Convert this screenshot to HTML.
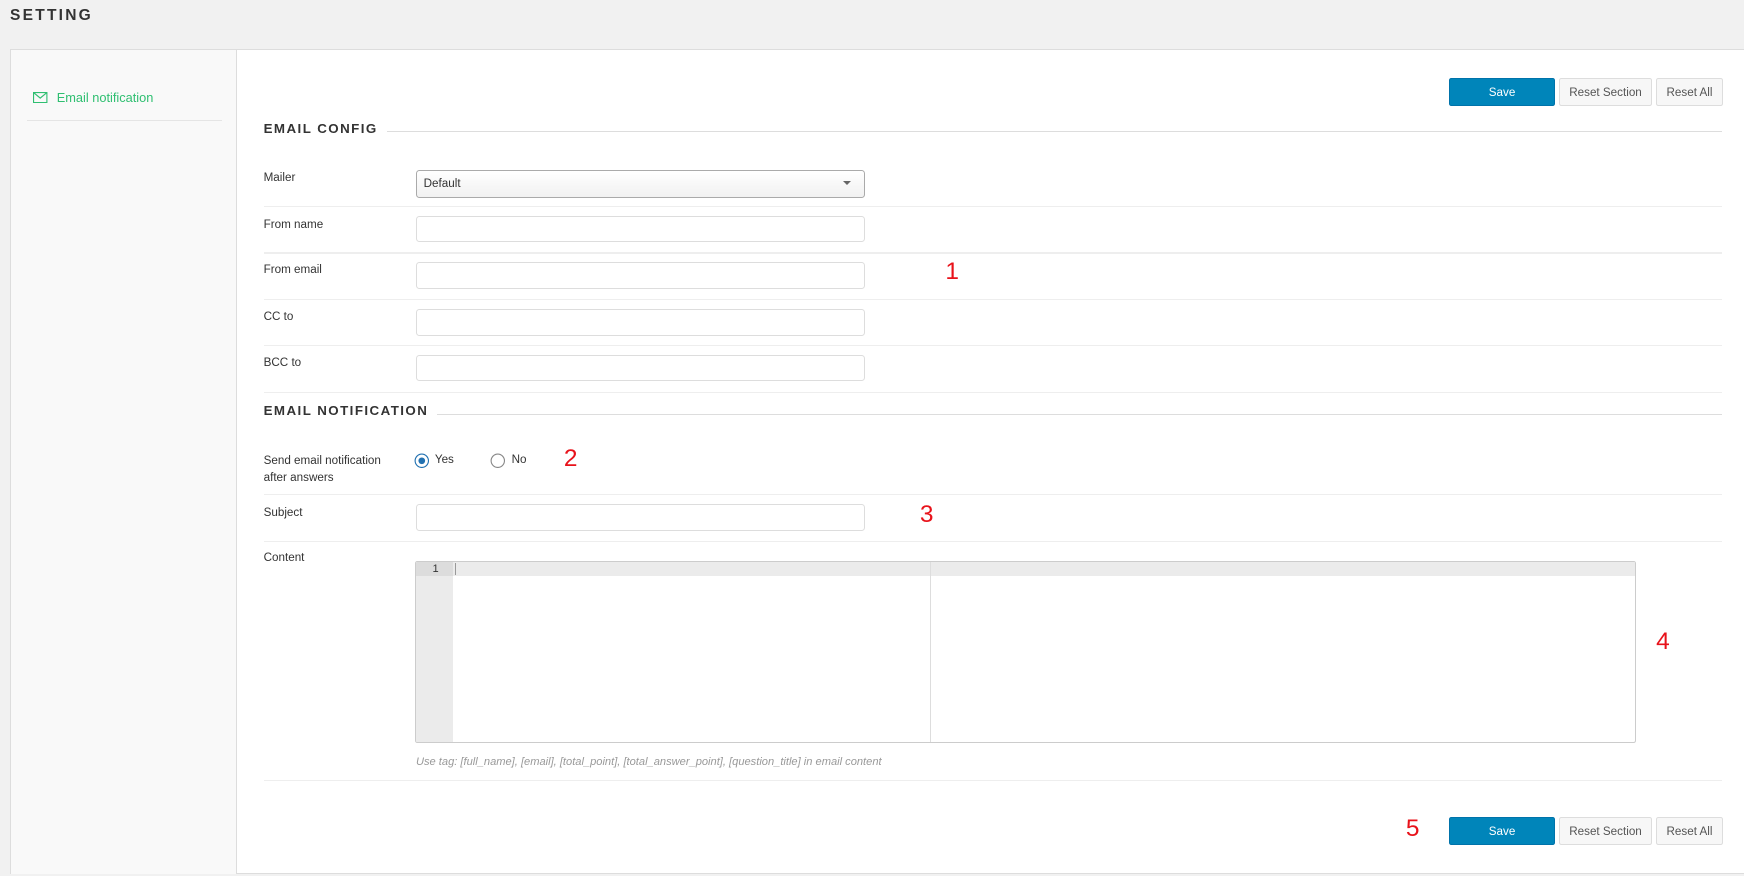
<!DOCTYPE html>
<html><head><meta charset="utf-8"><style>
html,body{margin:0;padding:0;background:#f1f1f1;overflow:hidden}
body{width:1568px;height:788px;zoom:1.11224;position:relative;font-family:"Liberation Sans",sans-serif;color:#333}
.a{position:absolute}
.h1{left:9px;top:6px;font-size:14px;font-weight:bold;letter-spacing:2px;color:#333}
.panel{left:9px;top:44px;width:1570px;height:740px;background:#fff;border:1px solid #ddd}
.side{left:9px;top:44px;width:202px;height:741px;background:#f9f9f9;border-right:1px solid #ddd;border-left:1px solid #ddd;border-top:1px solid #ddd}
.btn{position:absolute;height:25px;font-size:10.5px;line-height:25px;text-align:center;border:1px solid #ddd;background:#f7f7f7;color:#555;border-radius:2px;box-sizing:border-box}
.save{background:#0085ba;border-color:#0073aa;color:#fff}
.sec{font-size:12px;font-weight:bold;letter-spacing:1.3px;color:#333}
.hr{height:1px;background:#ddd}
.lbl{font-size:10.5px;color:#333;left:237px;line-height:16px}
.inp{left:374px;width:404px;height:24px;border:1px solid #ddd;border-radius:3px;box-sizing:border-box;background:#fff}
.red{color:#e8121a;font-size:22px}
</style></head><body>
<div class="a h1">SETTING</div>
<div class="a panel"></div>
<div class="a side"></div>
<svg class="a" style="left:30px;top:83px" width="13" height="10" viewBox="0 0 13 10"><rect x="0.5" y="0.5" width="12" height="9" fill="none" stroke="#2fbf71"/><path d="M0.5 0.5L6.5 5.5L12.5 0.5" fill="none" stroke="#2fbf71"/></svg>
<div class="a" style="left:51px;top:81px;font-size:11.5px;color:#2fbf71">Email notification</div>
<div class="a hr" style="left:24px;top:108px;width:176px;background:#e5e5e5"></div>

<div class="btn save" style="left:1303px;top:70px;width:95px">Save</div>
<div class="btn" style="left:1402px;top:70px;width:83px">Reset Section</div>
<div class="btn" style="left:1489px;top:70px;width:60px">Reset All</div>

<div class="a sec" style="left:237px;top:109px">EMAIL CONFIG</div>
<div class="a hr" style="left:348px;top:118px;width:1200px"></div>

<div class="a lbl" style="top:152px">Mailer</div>
<div class="a inp" style="top:153px;height:25px;border-color:#aaa;background:linear-gradient(#fff,#f1f1f1)"><span style="position:absolute;left:6px;top:5px;font-size:10.5px">Default</span><span style="position:absolute;right:12px;top:9px;border:4px solid transparent;border-top:4px solid #666"></span></div>
<div class="a hr" style="left:237px;top:185px;width:1311px;background:#eee"></div>
<div class="a lbl" style="top:194px">From name</div>
<div class="a inp" style="top:194px"></div>
<div class="a hr" style="left:237px;top:227px;width:1311px;background:#eee"></div>
<div class="a lbl" style="top:235px">From email</div>
<div class="a inp" style="top:236px"></div>
<div class="a hr" style="left:237px;top:269px;width:1311px;background:#eee"></div>
<div class="a lbl" style="top:277px">CC to</div>
<div class="a inp" style="top:278px"></div>
<div class="a hr" style="left:237px;top:310px;width:1311px;background:#eee"></div>
<div class="a lbl" style="top:318px">BCC to</div>
<div class="a inp" style="top:319px"></div>
<div class="a hr" style="left:237px;top:352px;width:1311px;background:#eee"></div>

<div class="a sec" style="left:237px;top:362px">EMAIL NOTIFICATION</div>
<div class="a hr" style="left:393px;top:372px;width:1155px"></div>

<div class="a lbl" style="top:406px">Send email notification<br>after answers</div>
<svg class="a" style="left:372px;top:407px" width="14" height="14"><circle cx="7" cy="7" r="6" fill="#fff" stroke="#2271b1" stroke-width="1"/><circle cx="7" cy="7" r="3" fill="#2271b1"/></svg>
<div class="a" style="left:391px;top:407px;font-size:10.5px">Yes</div>
<svg class="a" style="left:441px;top:407px" width="14" height="14"><circle cx="7" cy="7" r="6" fill="#fff" stroke="#888"/></svg>
<div class="a" style="left:460px;top:407px;font-size:10.5px">No</div>
<div class="a hr" style="left:237px;top:444px;width:1311px;background:#eee"></div>
<div class="a lbl" style="top:453px">Subject</div>
<div class="a inp" style="top:453px"></div>
<div class="a hr" style="left:237px;top:486px;width:1311px;background:#eee"></div>
<div class="a lbl" style="top:494px">Content</div>

<div class="a" style="left:373px;top:504px;width:1098px;height:164px;border:1px solid #ccc;box-sizing:border-box;border-radius:2px;background:#fff;overflow:hidden">
<div class="a" style="left:0;top:0;width:1098px;height:13px;background:#ebebeb"></div>
<div class="a" style="left:0;top:0;width:33px;height:164px;background:#ebebeb"></div>
<div class="a" style="left:0;top:0;width:33px;height:13px;background:#dcdcdc"></div>
<div class="a" style="left:15px;top:0;font-size:10px;line-height:13px;color:#333">1</div>
<div class="a" style="left:35px;top:1px;width:1px;height:11px;background:#999"></div>
<div class="a" style="left:462px;top:0;width:1px;height:164px;background:#ddd"></div>
</div>
<div class="a" style="left:374px;top:680px;font-size:10px;font-style:italic;color:#999">Use tag: [full_name], [email], [total_point], [total_answer_point], [question_title] in email content</div>
<div class="a hr" style="left:237px;top:701px;width:1311px;background:#eee"></div>

<div class="btn save" style="left:1303px;top:735px;width:95px">Save</div>
<div class="btn" style="left:1402px;top:735px;width:83px">Reset Section</div>
<div class="btn" style="left:1489px;top:735px;width:60px">Reset All</div>

<div class="a red" style="left:850px;top:232px">1</div>
<div class="a red" style="left:507px;top:400px">2</div>
<div class="a red" style="left:827px;top:450px">3</div>
<div class="a red" style="left:1489px;top:565px">4</div>
<div class="a red" style="left:1264px;top:733px">5</div>
</body></html>
